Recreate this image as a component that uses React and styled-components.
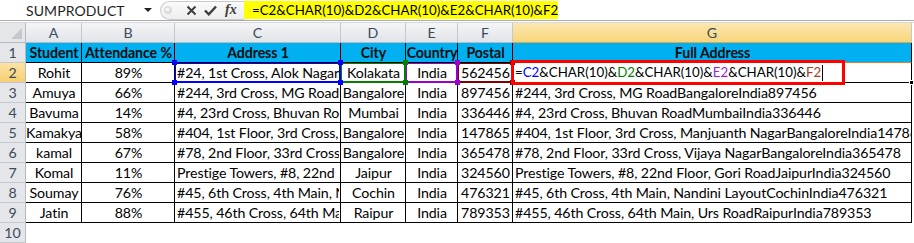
import React from "react";
import styled, { createGlobalStyle, css } from "styled-components";

const GlobalStyle = createGlobalStyle`
  html, body {
    margin: 0;
    padding: 0;
    background: #ffffff;
    overflow: hidden;
  }
  * { box-sizing: border-box; }
`;

const CELL_FONT = `"Lato", "Liberation Sans", sans-serif`;

const Window = styled.div`
  width: 914px;
  height: 243px;
  display: flex;
  flex-direction: column;
  background: #ffffff;
  font-family: ${CELL_FONT};
  overflow: hidden;
`;

/* ---------- formula bar ---------- */

const FormulaBar = styled.div`
  height: 25px;
  display: flex;
  align-items: flex-start;
  background: #ffffff;
  border-bottom: 1px solid #d7d9dc;
`;

const BarRow = styled.div`
  height: 21px;
  width: 100%;
  display: flex;
  align-items: center;
  border-bottom: 1px solid #a9abae;
`;

const NameBox = styled.div`
  width: 160px;
  height: 100%;
  display: flex;
  align-items: center;
  padding-left: 26px;
  padding-right: 8px;
  font-size: 14px;
  color: #1e1e1e;
`;

const NameText = styled.span`
  flex: 1;
  letter-spacing: 0.1px;
`;

const DropArrow = styled.span`
  width: 0;
  height: 0;
  border-left: 4px solid transparent;
  border-right: 4px solid transparent;
  border-top: 4px solid #222;
`;

const Buttons = styled.div`
  width: 84px;
  height: 19px;
  display: flex;
  align-items: center;
  background: linear-gradient(#fafafa, #eeeeee);
  border: 1px solid #c9cbce;
  border-right: none;
  border-radius: 10px 0 0 10px;
  padding-left: 3px;
`;

const Grip = styled.span`
  width: 8px;
  height: 8px;
  border-radius: 50%;
  background: radial-gradient(circle at 40% 35%, #ffffff, #c8cacd);
  border: 1px solid #d2d4d6;
  margin-right: 10px;
`;

const IconButton = styled.span`
  width: 19px;
  display: flex;
  justify-content: center;
  align-items: center;
`;

const Fx = styled.span`
  font-family: "Liberation Serif", serif;
  font-style: italic;
  font-weight: bold;
  font-size: 14px;
  color: #3c3c3c;
  padding-left: 5px;
`;

const FormulaInput = styled.div`
  flex: 1;
  height: 100%;
  display: flex;
  align-items: center;
`;

const Highlight = styled.span`
  background: #ffff00;
  height: 18px;
  width: 314px;
  display: flex;
  align-items: center;
  padding: 0 0 0 8px;
  font-size: 13.3px;
  color: #000;
`;

/* ---------- sheet grid ---------- */

const Sheet = styled.div`
  display: grid;
  grid-template-columns: 26px 56px 93px 166px 65px 52px 55px 399px;
  grid-auto-rows: 20px;
  width: 912px;
`;

const ColHead = styled.div`
  display: flex;
  align-items: center;
  justify-content: center;
  font-size: 14.2px;
  color: #3b4a5c;
  border-right: 1px solid #c5c9cf;
  border-bottom: 1px solid #b6bbc2;
  background: ${(p) =>
    p.$active
      ? "linear-gradient(#fbe7b0, #f8d57b)"
      : "linear-gradient(#f4f5f7, #e1e4e8)"};
  ${(p) =>
    p.$active &&
    css`
      border-bottom-color: #d8a84e;
    `}
`;

const Corner = styled.div`
  position: relative;
  background: #e4e6ea;
  border-right: 1px solid #b6bbc2;
  border-bottom: 1px solid #b6bbc2;

  &::after {
    content: "";
    position: absolute;
    right: 3px;
    bottom: 3px;
    width: 0;
    height: 0;
    border-left: 11px solid transparent;
    border-bottom: 11px solid #c4c8cd;
  }
`;

const RowHead = styled.div`
  display: flex;
  align-items: center;
  justify-content: center;
  font-size: 14.2px;
  color: #3b4a5c;
  border-right: 1px solid #b6bbc2;
  border-bottom: 1px solid #c5c9cf;
  background: ${(p) =>
    p.$active ? "linear-gradient(#fbe3a3, #f7cf72)" : "#e4e6ea"};
`;

const Cell = styled.div`
  position: relative;
  display: flex;
  align-items: center;
  justify-content: ${(p) => (p.$align === "left" ? "flex-start" : "center")};
  padding: 0 1px 0 2px;
  font-size: 14.2px;
  letter-spacing: -0.1px;
  color: #000;
  white-space: nowrap;
  overflow: ${(p) => (p.$overflow ? "visible" : "hidden")};
  border-right: 1px solid #000;
  border-bottom: 1px solid #000;
  background: #fff;
  ${(p) =>
    p.$head &&
    css`
      background: #00b0f0;
      font-weight: bold;
      color: #0d0d0d;
    `}
  ${(p) =>
    p.$bottomColor &&
    css`
      border-bottom-color: ${p.$bottomColor};
    `}
  ${(p) =>
    p.$ref &&
    css`
      overflow: visible;
      box-shadow: inset 1px 1px 0 ${p.$ref}, inset -1px 0 0 ${p.$ref},
        inset 0 -1px 0 ${p.$ref};
      border-right-color: ${p.$ref};
      border-bottom-color: ${p.$ref};
    `}
`;

const Clip = styled.span`
  overflow: hidden;
  max-width: 100%;
`;

const Blank = styled.div`
  background: #fff;
`;

const Handle = styled.span`
  position: absolute;
  width: 5px;
  height: 5px;
  background: ${(p) => p.$color};
  z-index: 2;
  ${(p) => (p.$top ? "top: -3px;" : "bottom: -3px;")}
  ${(p) => (p.$left ? "left: -3px;" : "right: -3px;")}
`;

const Ref = styled.span`
  color: ${(p) => p.$color};
`;

const Caret = styled.span`
  display: inline-block;
  vertical-align: middle;
  width: 1px;
  height: 16px;
  background: #000;
  margin-left: 1px;
`;

const FormulaText = styled.span`
  display: inline;
  white-space: nowrap;
  font-size: 13.3px;
  letter-spacing: 0;
`;

const Annotation = styled.span`
  position: absolute;
  left: -2px;
  top: -3px;
  width: 334px;
  height: 25px;
  border: 3px solid #ff0000;
  pointer-events: none;
  z-index: 3;
`;

const FillHandle = styled.span`
  position: absolute;
  right: -3px;
  bottom: -3px;
  width: 5px;
  height: 5px;
  background: #000;
  border: 1px solid #fff;
  z-index: 3;
`;

const rows = [
  ["Rohit", "89%", "#24, 1st Cross, Alok Nagar", "Kolakata", "India", "562456"],
  ["Amuya", "66%", "#244, 3rd Cross, MG Road", "Bangalore", "India", "897456"],
  ["Bavuma", "14%", "#4, 23rd Cross, Bhuvan Road", "Mumbai", "India", "336446"],
  ["Kamakya", "58%", "#404, 1st Floor, 3rd Cross, Manjuanth Nagar", "Bangalore", "India", "147865"],
  ["kamal", "67%", "#78, 2nd Floor, 33rd Cross, Vijaya Nagar", "Bangalore", "India", "365478"],
  ["Komal", "11%", "Prestige Towers, #8, 22nd Floor, Gori Road", "Jaipur", "India", "324560"],
  ["Soumay", "76%", "#45, 6th Cross, 4th Main, Nandini Layout", "Cochin", "India", "476321"],
  ["Jatin", "88%", "#455, 46th Cross, 64th Main, Urs Road", "Raipur", "India", "789353"],
];

const headers = ["Student", "Attendance %", "Address 1", "City", "Country", "Postal", "Full Address"];
const letters = ["A", "B", "C", "D", "E", "F", "G"];

const REF = {
  C: "#0000ff",
  D: "#008000",
  E: "#9900cc",
  F: "#800000",
};

const Corners = ({ color, left = true }) => (
  <>
    {left && <Handle $color={color} $top $left />}
    {left && <Handle $color={color} $left />}
    <Handle $color={color} $top />
    <Handle $color={color} />
  </>
);

const Formula = () => (
  <FormulaText>
    {"="}
    <Ref $color={REF.C}>C2</Ref>
    {"&CHAR(10)&"}
    <Ref $color={REF.D}>D2</Ref>
    {"&CHAR(10)&"}
    <Ref $color="#9b1fd0">E2</Ref>
    {"&CHAR(10)&"}
    <Ref $color="#a8401c">F2</Ref>
    <Caret />
  </FormulaText>
);

export default function App() {
  return (
    <>
      <GlobalStyle />
      <Window>
        <FormulaBar>
          <BarRow>
            <NameBox>
              <NameText>SUMPRODUCT</NameText>
              <DropArrow />
            </NameBox>
            <Buttons>
              <Grip />
              <IconButton>
                <svg width="11" height="11" viewBox="0 0 11 11">
                  <path d="M1.5 1.5 L9.5 9.5 M9.5 1.5 L1.5 9.5" stroke="#3d3d3d" strokeWidth="2" />
                </svg>
              </IconButton>
              <IconButton>
                <svg width="13" height="11" viewBox="0 0 13 11">
                  <path d="M1 5.5 L4.8 9.3 L12 1.5" fill="none" stroke="#3d3d3d" strokeWidth="2.4" />
                </svg>
              </IconButton>
              <Fx>fx</Fx>
            </Buttons>
            <FormulaInput>
              <Highlight>{"=C2&CHAR(10)&D2&CHAR(10)&E2&CHAR(10)&F2"}</Highlight>
            </FormulaInput>
          </BarRow>
        </FormulaBar>

        <Sheet>
          <Corner />
          {letters.map((l) => (
            <ColHead key={l} $active={l === "G"}>
              {l}
            </ColHead>
          ))}

          <RowHead>1</RowHead>
          {headers.map((h, i) => (
            <Cell key={h} $head $bottomColor={i === 6 ? "#e87b2a" : undefined}>
              {h}
            </Cell>
          ))}

          {rows.map((r, idx) => {
            const n = idx + 2;
            const first = n === 2;
            return (
              <React.Fragment key={n}>
                <RowHead $active={first}>{n}</RowHead>
                <Cell>{r[0]}</Cell>
                <Cell>{r[1]}</Cell>
                <Cell $align="left" $ref={first ? REF.C : undefined}>
                  <Clip>{r[2]}</Clip>
                  {first && <Corners color={REF.C} />}
                </Cell>
                <Cell $ref={first ? REF.D : undefined}>
                  {r[3]}
                  {first && <Corners color={REF.D} left={false} />}
                </Cell>
                <Cell $ref={first ? REF.E : undefined}>
                  {r[4]}
                  {first && <Corners color={REF.E} left={false} />}
                </Cell>
                <Cell $ref={first ? REF.F : undefined}>
                  {r[5]}
                  {first && <Corners color={REF.F} left={false} />}
                </Cell>
                {first ? (
                  <Cell $align="left" $overflow>
                    <Formula />
                    <Annotation />
                    <FillHandle />
                  </Cell>
                ) : (
                  <Cell $align="left">{r[2] + r[3] + r[4] + r[5]}</Cell>
                )}
              </React.Fragment>
            );
          })}

          <RowHead>10</RowHead>
          <Blank />
          <Blank />
          <Blank />
          <Blank />
          <Blank />
          <Blank />
          <Blank />
        </Sheet>
      </Window>
    </>
  );
}
